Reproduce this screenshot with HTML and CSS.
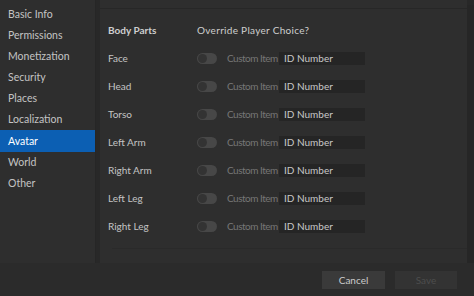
FILE: index.html
```html
<!doctype HTML>
<html lang="en">
<head>
    <meta charset="utf-8">
    <title>Avatar Settings</title>
    <link rel="stylesheet" href="styles.css">
</head>
<body>
<div class="window">
    <div class="top">
        <ul class="menu">
            <li>Basic Info</li>
            <li>Permissions</li>
            <li>Monetization</li>
            <li>Security</li>
            <li>Places</li>
            <li>Localization</li>
            <li class="active">Avatar</li>
            <li>World</li>
            <li>Other</li>
        </ul>
        <div class="panel">
            <div class="head">
                <span class="label bold">Body Parts</span>
                <span class="wide">Override Player Choice?</span>
            </div>
            <div class="row"><span class="label">Face</span><i class="toggle"></i><span class="dim">Custom Item</span><span class="field">ID Number</span></div>
            <div class="row"><span class="label">Head</span><i class="toggle"></i><span class="dim">Custom Item</span><span class="field">ID Number</span></div>
            <div class="row"><span class="label">Torso</span><i class="toggle"></i><span class="dim">Custom Item</span><span class="field">ID Number</span></div>
            <div class="row"><span class="label">Left Arm</span><i class="toggle"></i><span class="dim">Custom Item</span><span class="field">ID Number</span></div>
            <div class="row"><span class="label">Right Arm</span><i class="toggle"></i><span class="dim">Custom Item</span><span class="field">ID Number</span></div>
            <div class="row"><span class="label">Left Leg</span><i class="toggle"></i><span class="dim">Custom Item</span><span class="field">ID Number</span></div>
            <div class="row"><span class="label">Right Leg</span><i class="toggle"></i><span class="dim">Custom Item</span><span class="field">ID Number</span></div>
            <div class="sep"></div>
        </div>
        <div class="edge"></div>
    </div>
    <div class="footer">
        <span class="button">Cancel</span>
        <span class="button off">Save</span>
    </div>
</div>
</body>
</html>
```

FILE: styles.css
```css
body {
    margin: 0;
    background-color: #2b2b2b;
    font-family: "Lato", "Liberation Sans", sans-serif;
    font-size: 10px;
    color: #c4c4c4;
}
.window {
    width: 474px;
    height: 296px;
    display: flex;
    flex-direction: column;
}
.top {
    height: 263px;
    display: flex;
    background-color: #282828;
}
.menu {
    list-style: none;
    margin: 0;
    padding: 4px 0 0 0;
    width: 95px;
    background-color: #2e2e2e;
    border-right: 1px solid #262626;
}
.menu li {
    height: 21px;
    line-height: 21px;
    padding-left: 8px;
    font-size: 10.5px;
}
.menu li.active {
    height: 22px;
    line-height: 22px;
    background-color: #0c5fb3;
    color: #ffffff;
}
.panel {
    flex: 1;
    margin-left: 4px;
    background-color: #2e2e2e;
    padding: 16px 0 0 8px;
    position: relative;
}
.panel::before {
    content: "";
    position: absolute;
    left: 0;
    right: 0;
    top: 8px;
    border-top: 1px solid #272727;
}
.head, .row {
    display: flex;
    align-items: center;
    height: 28px;
    white-space: nowrap;
}
.head {
    color: #cfcfcf;
}
.wide {
    letter-spacing: 0.3px;
}
.label {
    width: 89px;
    flex-shrink: 0;
}
.bold {
    font-weight: bold;
}
.toggle {
    flex-shrink: 0;
    width: 20px;
    height: 11px;
    border-radius: 6px;
    background-color: #474747;
    position: relative;
    margin-right: 10px;
}
.toggle::after {
    content: "";
    position: absolute;
    left: 1px;
    top: 1px;
    width: 9px;
    height: 9px;
    border-radius: 50%;
    background-color: #333333;
}
.dim {
    flex-shrink: 0;
    color: #767676;
    width: 52px;
    letter-spacing: -0.5px;
}
.field {
    flex-shrink: 0;
    width: 81px;
    height: 13px;
    line-height: 13px;
    padding-left: 5px;
    background-color: #252525;
    color: #c8c8c8;
}
.sep {
    margin: 8px 0 0 4px;
    border-top: 1px solid #2a2a2a;
}
.edge {
    width: 7px;
    background-color: #262626;
    margin-top: 5px;
}
.footer {
    flex: 1;
    display: flex;
    justify-content: flex-end;
    align-items: flex-start;
    gap: 10px;
    padding: 8px 17px 0 0;
    background-color: #2b2b2b;
}
.button {
    width: 63px;
    height: 18px;
    line-height: 18px;
    text-align: center;
    background-color: #3a3a3a;
    color: #cccccc;
}
.button.off {
    width: 62px;
    background-color: #333333;
    color: #4d4d4d;
}
```
